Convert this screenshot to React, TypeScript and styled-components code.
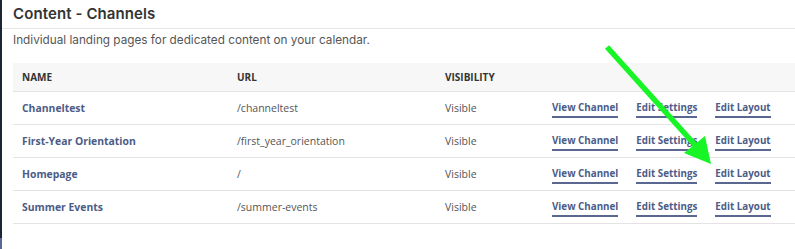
import React from "react";
import styled, { createGlobalStyle } from "styled-components";

const Global = createGlobalStyle`
  html, body { margin: 0; padding: 0; background: #fff; }
  body { width: 795px; height: 249px; overflow: hidden; }
  #root { height: 249px; }
`;

const Page = styled.div`
  position: relative;
  display: flex;
  height: 249px;
  width: 795px;
  overflow: hidden;
`;

const Sidebar = styled.div`
  width: 2px;
  flex: none;
  background: linear-gradient(#1d2434 0, #1d2434 238px, #5a6896 238px);
`;

const Main = styled.div`
  flex: 1;
  display: flex;
  flex-direction: column;
`;

const Header = styled.div`
  height: 29px;
  box-sizing: border-box;
  border-bottom: 1px solid #e6e6e6;
  padding: 4px 0 0 11px;
  font-family: "Inter", "Noto Sans", sans-serif;
  font-weight: 600;
  font-size: 15px;
  letter-spacing: 0.1px;
  color: #333;
`;

const Description = styled.p`
  margin: 0;
  padding: 3px 0 0 11px;
  font-family: "Inter", "Noto Sans", sans-serif;
  font-size: 11.75px;
  color: #555;
  line-height: 16px;
`;

const Table = styled.div`
  margin: 15px 0 0 11px;
  display: grid;
  grid-template-columns: 215px 208px 107px 1fr;
  font-family: "Open Sans", sans-serif;
  font-size: 10.5px;
`;

const HeadCell = styled.div`
  height: 29px;
  box-sizing: border-box;
  display: flex;
  align-items: center;
  padding-left: 9px;
  background: #f7f7f7;
  border-bottom: 1px solid #e3e3e3;
  font-weight: 700;
  font-size: 10px;
  color: #333;
  text-transform: uppercase;
`;

const Cell = styled.div<{ $bold?: boolean }>`
  height: 33px;
  box-sizing: border-box;
  display: flex;
  align-items: center;
  padding-left: 9px;
  border-bottom: 1px solid #e3e3e3;
  color: ${(p) => (p.$bold ? "#4c5c87" : "#555")};
  font-weight: ${(p) => (p.$bold ? 700 : 400)};
  font-size: ${(p) => (p.$bold ? "10.4px" : "10.5px")};
`;

const Actions = styled(Cell)`
  gap: 18px;
  padding-top: 2px;
`;

const ActionLink = styled.a`
  color: #4c5c87;
  font-weight: 700;
  font-size: 9.8px;
  text-decoration: none;
  border-bottom: 2px solid #5a6891;
  padding-bottom: 1px;
  line-height: 14px;
`;

const Arrow = styled.svg`
  position: absolute;
  left: 0;
  top: 0;
  pointer-events: none;
`;

const rows = [
  { name: "Channeltest", url: "/channeltest" },
  { name: "First-Year Orientation", url: "/first_year_orientation" },
  { name: "Homepage", url: "/" },
  { name: "Summer Events", url: "/summer-events" },
];

export default function App() {
  return (
    <Page>
      <Global />
      <Sidebar />
      <Main>
        <Header>Content - Channels</Header>
        <Description>Individual landing pages for dedicated content on your calendar.</Description>
        <Table>
          <HeadCell>Name</HeadCell>
          <HeadCell>URL</HeadCell>
          <HeadCell>Visibility</HeadCell>
          <HeadCell />
          {rows.map((r) => (
            <React.Fragment key={r.name}>
              <Cell $bold>{r.name}</Cell>
              <Cell>{r.url}</Cell>
              <Cell>Visible</Cell>
              <Actions>
                <ActionLink href="#">View Channel</ActionLink>
                <ActionLink href="#">Edit Settings</ActionLink>
                <ActionLink href="#">Edit Layout</ActionLink>
              </Actions>
            </React.Fragment>
          ))}
        </Table>
      </Main>
      <Arrow width="795" height="249" viewBox="0 0 795 249">
        <line x1="607" y1="47" x2="696" y2="146" stroke="#18f526" strokeWidth="5.5" strokeLinecap="butt" />
        <polygon points="711,164 684,153 705,136" fill="#18f526" />
      </Arrow>
    </Page>
  );
}
